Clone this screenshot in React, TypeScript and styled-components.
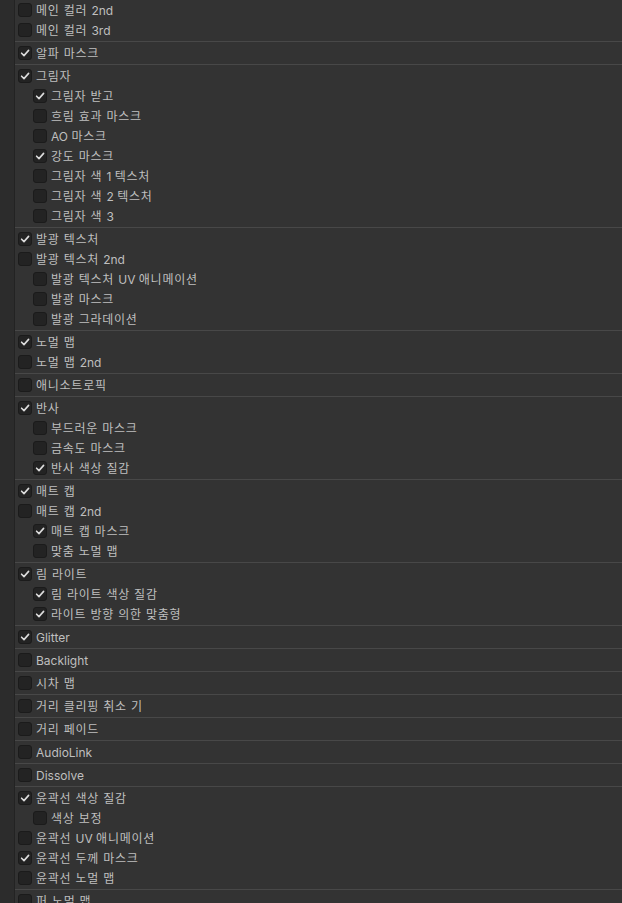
import React from "react";
import styled, { createGlobalStyle } from "styled-components";

const Global = createGlobalStyle`
  html, body { margin: 0; padding: 0; background: #333333; }
  body { overflow: hidden; }
`;

type Item = { label: string; checked?: boolean; child?: boolean };

const groups: Item[][] = [
  [
    { label: "메인 컬러 2nd" },
    { label: "메인 컬러 3rd" },
  ],
  [{ label: "알파 마스크", checked: true }],
  [
    { label: "그림자", checked: true },
    { label: "그림자 받고", checked: true, child: true },
    { label: "흐림 효과 마스크", child: true },
    { label: "AO 마스크", child: true },
    { label: "강도 마스크", checked: true, child: true },
    { label: "그림자 색 1 텍스처", child: true },
    { label: "그림자 색 2 텍스처", child: true },
    { label: "그림자 색 3", child: true },
  ],
  [
    { label: "발광 텍스처", checked: true },
    { label: "발광 텍스처 2nd" },
    { label: "발광 텍스처 UV 애니메이션", child: true },
    { label: "발광 마스크", child: true },
    { label: "발광 그라데이션", child: true },
  ],
  [
    { label: "노멀 맵", checked: true },
    { label: "노멀 맵 2nd" },
  ],
  [{ label: "애니소트로픽" }],
  [
    { label: "반사", checked: true },
    { label: "부드러운 마스크", child: true },
    { label: "금속도 마스크", child: true },
    { label: "반사 색상 질감", checked: true, child: true },
  ],
  [
    { label: "매트 캡", checked: true },
    { label: "매트 캡 2nd" },
    { label: "매트 캡 마스크", checked: true, child: true },
    { label: "맞춤 노멀 맵", child: true },
  ],
  [
    { label: "림 라이트", checked: true },
    { label: "림 라이트 색상 질감", checked: true, child: true },
    { label: "라이트 방향 의한 맞춤형", checked: true, child: true },
  ],
  [{ label: "Glitter", checked: true }],
  [{ label: "Backlight" }],
  [{ label: "시차 맵" }],
  [{ label: "거리 클리핑 취소 기" }],
  [{ label: "거리 페이드" }],
  [{ label: "AudioLink" }],
  [{ label: "Dissolve" }],
  [
    { label: "윤곽선 색상 질감", checked: true },
    { label: "색상 보정", child: true },
    { label: "윤곽선 UV 애니메이션" },
    { label: "윤곽선 두께 마스크", checked: true },
    { label: "윤곽선 노멀 맵" },
  ],
  [{ label: "퍼 노멀 맵" }],
];

const Page = styled.div`
  display: flex;
  width: 622px;
  height: 903px;
  overflow: hidden;
  background: #333333;
  font-family: Inter, "Noto Sans CJK KR", sans-serif;
  font-size: 12px;
`;

const Gutter = styled.div`
  width: 14px;
  flex: none;
  background: #2c2c2c;
  border-right: 1px solid #232323;
`;

const List = styled.div`
  flex: 1;
  display: flex;
  flex-direction: column;
`;

const Group = styled.div`
  display: flex;
  flex-direction: column;
`;

const Separator = styled.div`
  height: 1px;
  margin: 1px 0;
  background: #484848;
  flex: none;
`;

const Row = styled.div<{ $child?: boolean }>`
  height: 20px;
  flex: none;
  display: flex;
  align-items: center;
  padding-left: ${(p) => (p.$child ? 18 : 3)}px;
  gap: 4px;
  color: #bfbfbf;
  white-space: nowrap;
`;

const Box = styled.span`
  width: 14px;
  height: 14px;
  box-sizing: border-box;
  border-radius: 3px;
  background: #232323;
  border: 1px solid #1b1b1b;
  display: flex;
  align-items: center;
  justify-content: center;
  flex: none;
`;

const Label = styled.span`
  line-height: 20px;
  padding-top: 1px;
`;

const Hangul = styled.span`
  letter-spacing: 0.75px;
`;

const splitRuns = (s: string) => s.match(/[\uac00-\ud7a3][\uac00-\ud7a3 ]*|[^\uac00-\ud7a3]+/g) || [s];

const Check = () => (
  <svg width="12" height="12" viewBox="0 0 12 12">
    <path d="M2.6 6.2 L5 8.6 L9.6 3.4" fill="none" stroke="#dcdcdc" strokeWidth="1.6" strokeLinecap="round" strokeLinejoin="round" />
  </svg>
);

export default function App() {
  return (
    <>
      <Global />
      <Page>
        <Gutter />
        <List>
          {groups.map((g, gi) => (
            <React.Fragment key={gi}>
              {gi > 0 && <Separator />}
              <Group>
                {g.map((it, i) => (
                  <Row key={i} $child={it.child}>
                    <Box>{it.checked && <Check />}</Box>
                    <Label>
                      {splitRuns(it.label).map((r, k) =>
                        /[\uac00-\ud7a3]/.test(r) ? <Hangul key={k}>{r}</Hangul> : <React.Fragment key={k}>{r}</React.Fragment>
                      )}
                    </Label>
                  </Row>
                ))}
              </Group>
            </React.Fragment>
          ))}
        </List>
      </Page>
    </>
  );
}
